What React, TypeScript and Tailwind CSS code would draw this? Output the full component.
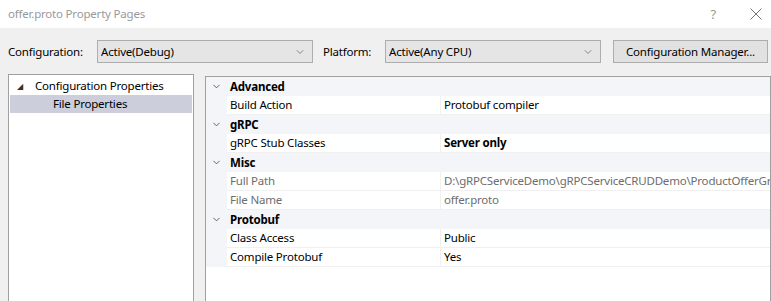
import { ChevronDown } from "lucide-react";

type Row =
  | { kind: "cat"; label: string }
  | { kind: "prop"; name: string; value: string; bold?: boolean; readOnly?: boolean };

const rows: Row[] = [
  { kind: "cat", label: "Advanced" },
  { kind: "prop", name: "Build Action", value: "Protobuf compiler" },
  { kind: "cat", label: "gRPC" },
  { kind: "prop", name: "gRPC Stub Classes", value: "Server only", bold: true },
  { kind: "cat", label: "Misc" },
  {
    kind: "prop",
    name: "Full Path",
    value: "D:\\gRPCServiceDemo\\gRPCServiceCRUDDemo\\ProductOfferGrpc\\Protos\\offer.proto",
    readOnly: true,
  },
  { kind: "prop", name: "File Name", value: "offer.proto", readOnly: true },
  { kind: "cat", label: "Protobuf" },
  { kind: "prop", name: "Class Access", value: "Public" },
  { kind: "prop", name: "Compile Protobuf", value: "Yes" },
];

const Combo = ({ value }: { value: string }) => (
  <div className="flex items-center w-[216px] h-[23px] bg-[#e5e5e5] border border-[#adadad] pl-[3px] pr-[6px]">
    <span className="flex-1 text-black">{value}</span>
    <ChevronDown size={12} strokeWidth={1.3} className="text-[#555]" />
  </div>
);

const App = () => {
  return (
    <div
      className="w-[771px] h-[301px] overflow-hidden bg-[#f0f0f0] text-[11.5px] tracking-[-0.2px] leading-none text-black"
      style={{ fontFamily: '"Segoe UI", "Noto Sans", sans-serif' }}
    >
      <div className="h-[28px] bg-white flex items-center pl-2 pr-[9px] text-[#999]">
        <span className="flex-1">offer.proto Property Pages</span>
        <span className="mr-[34px] text-[13px]">?</span>
        <svg width="12" height="12" viewBox="0 0 12 12" className="text-[#777]">
          <path d="M0.5 0.5 L11.5 11.5 M11.5 0.5 L0.5 11.5" stroke="currentColor" strokeWidth="1" />
        </svg>
      </div>

      <div className="flex items-center h-[23px] mt-[12px] pl-2">
        <span className="w-[89px]">Configuration:</span>
        <Combo value="Active(Debug)" />
        <span className="ml-[10px] w-[62px]">Platform:</span>
        <Combo value="Active(Any CPU)" />
        <div className="ml-[12px] w-[155px] h-[23px] flex items-center justify-center bg-[#e1e1e1] border border-[#adadad]">
          Configuration Manager...
        </div>
      </div>

      <div className="flex mt-[11px] h-[300px]">
        <div className="ml-2 w-[186px] bg-white border border-[#a0a0a0] pt-px px-px">
          <div className="flex items-center h-[19px]">
            <span className="ml-[7px] w-[18px] text-[8px] text-[#333]">◢</span>
            <span>Configuration Properties</span>
          </div>
          <div className="flex items-center h-[18px] bg-[#cccedb] pl-[43px]">File Properties</div>
        </div>

        <div className="ml-[11px] mt-[2px] w-[566px] bg-white border border-[#a0a0a0]">
          {rows.map((r, i) =>
            r.kind === "cat" ? (
              <div key={i} className="flex items-center h-[19px] bg-[#f3f5f9]">
                <span className="w-[21px] shrink-0 flex justify-center">
                  <ChevronDown size={11} strokeWidth={2} className="text-[#555]" />
                </span>
                <span className="pl-[3px] font-bold">{r.label}</span>
              </div>
            ) : (
              <div key={i} className="flex h-[19px]">
                <span className="w-[21px] shrink-0 bg-[#f3f5f9]" />
                <div
                  className={`flex flex-1 min-w-0 border-b border-[#f0f0f0] ${r.readOnly ? "text-[#6d6d6d]" : ""}`}
                >
                  <span className="w-[214px] shrink-0 flex items-center pl-[3px] border-r border-[#f0f0f0]">
                    {r.name}
                  </span>
                  <span
                    className={`flex-1 min-w-0 flex items-center pl-[3px] whitespace-nowrap overflow-hidden ${r.bold ? "font-bold" : ""}`}
                  >
                    {r.value}
                  </span>
                </div>
              </div>
            )
          )}
        </div>
      </div>
    </div>
  );
};

export default App;
